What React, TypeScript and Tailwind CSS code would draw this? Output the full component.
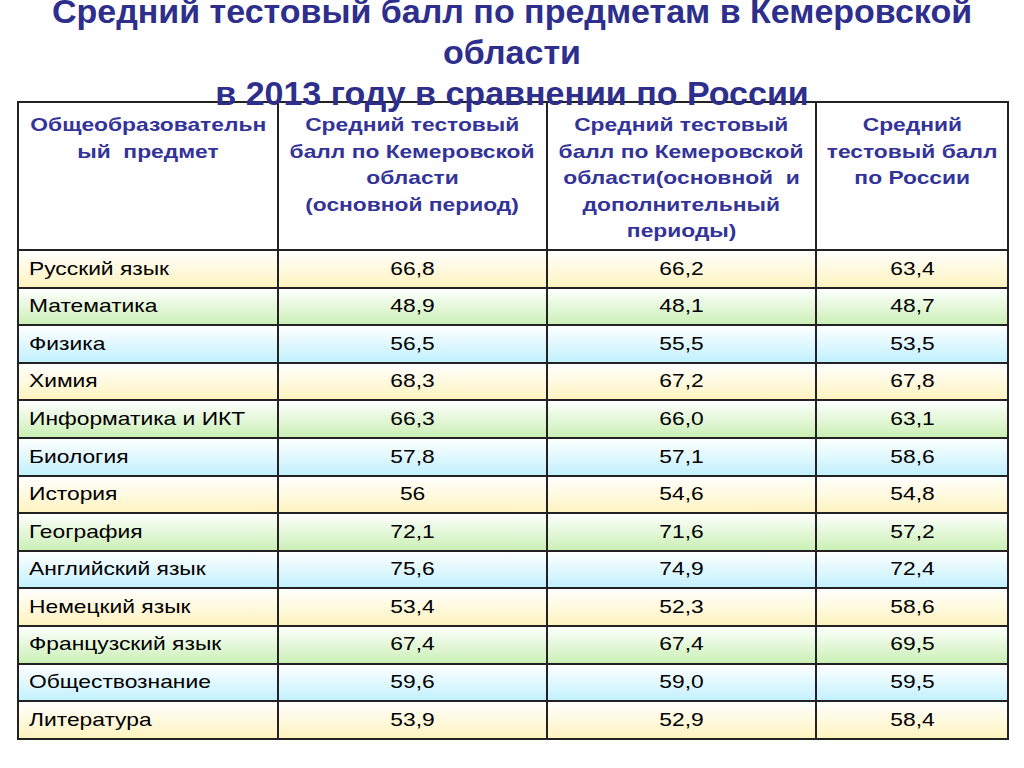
import React from "react";

type Row = { subject: string; main: string; full: string; rf: string };

const rows: Row[] = [
  { subject: "Русский язык", main: "66,8", full: "66,2", rf: "63,4" },
  { subject: "Математика", main: "48,9", full: "48,1", rf: "48,7" },
  { subject: "Физика", main: "56,5", full: "55,5", rf: "53,5" },
  { subject: "Химия", main: "68,3", full: "67,2", rf: "67,8" },
  { subject: "Информатика и ИКТ", main: "66,3", full: "66,0", rf: "63,1" },
  { subject: "Биология", main: "57,8", full: "57,1", rf: "58,6" },
  { subject: "История", main: "56", full: "54,6", rf: "54,8" },
  { subject: "География", main: "72,1", full: "71,6", rf: "57,2" },
  { subject: "Английский язык", main: "75,6", full: "74,9", rf: "72,4" },
  { subject: "Немецкий язык", main: "53,4", full: "52,3", rf: "58,6" },
  { subject: "Французский язык", main: "67,4", full: "67,4", rf: "69,5" },
  { subject: "Обществознание", main: "59,6", full: "59,0", rf: "59,5" },
  { subject: "Литература", main: "53,9", full: "52,9", rf: "58,4" },
];

// yellow, green, cyan — repeating
const bands = [
  "bg-gradient-to-b from-white to-[#fff3bd]",
  "bg-gradient-to-b from-white to-[#c9efb3]",
  "bg-gradient-to-b from-white to-[#bff0ff]",
];

const th = "border-2 border-[#222] align-top px-1 pt-[9px] text-center text-[19px] font-bold leading-[26.5px] text-[#333399]";
const td = "border-2 border-[#222] px-[10px] text-[19px] text-black whitespace-nowrap";

// the slide text is stretched a little wider than plain Arial
function Wide({ children, left }: { children: React.ReactNode; left?: boolean }) {
  return (
    <span className={`inline-block scale-x-[1.2] ${left ? "origin-left" : "origin-center"}`}>
      {children}
    </span>
  );
}

export default function App() {
  return (
    <div className="h-[768px] w-[1024px] overflow-hidden bg-white font-['Liberation_Sans',Arial,sans-serif]">
      <h1 className="relative z-10 -mt-[9px] text-center text-[34px] font-bold leading-[41px] text-[#2e2e8c]">
        Средний тестовый балл по предметам в Кемеровской
        <br />
        области
        <br />
        в 2013 году в сравнении по России
      </h1>

      <table className="ml-[17px] -mt-[13px] w-[990px] table-fixed border-collapse">
        <colgroup>
          <col className="w-[260px]" />
          <col className="w-[269px]" />
          <col className="w-[269px]" />
          <col className="w-[192px]" />
        </colgroup>
        <thead>
          <tr className="h-[148px]">
            <th className={th}>
              <Wide>Общеобразовательн</Wide><br /><Wide>ый&nbsp; предмет</Wide>
            </th>
            <th className={th}>
              <Wide>Средний тестовый</Wide><br /><Wide>балл по Кемеровской</Wide><br /><Wide>области</Wide><br /><Wide>(основной период)</Wide>
            </th>
            <th className={th}>
              <Wide>Средний тестовый</Wide><br /><Wide>балл по Кемеровской</Wide><br /><Wide>области(основной&nbsp; и</Wide><br /><Wide>дополнительный</Wide><br /><Wide>периоды)</Wide>
            </th>
            <th className={th}>
              <Wide>Средний</Wide><br /><Wide>тестовый балл</Wide><br /><Wide>по России</Wide>
            </th>
          </tr>
        </thead>
        <tbody>
          {rows.map((r, i) => (
            <tr key={r.subject} className={`h-[37.6px] ${bands[i % 3]}`}>
              <td className={td}><Wide left>{r.subject}</Wide></td>
              <td className={`${td} text-center`}><Wide>{r.main}</Wide></td>
              <td className={`${td} text-center`}><Wide>{r.full}</Wide></td>
              <td className={`${td} text-center`}><Wide>{r.rf}</Wide></td>
            </tr>
          ))}
        </tbody>
      </table>
    </div>
  );
}
